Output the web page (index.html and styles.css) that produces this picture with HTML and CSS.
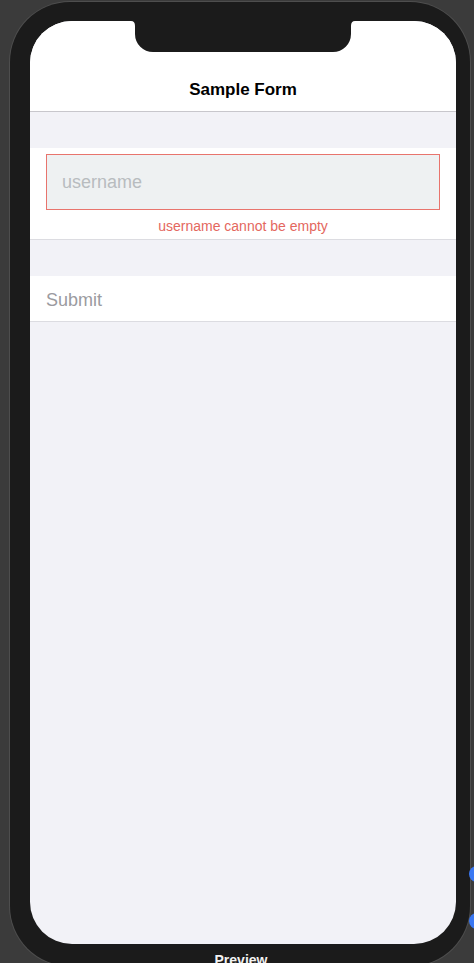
FILE: index.html
```html
<!DOCTYPE html>
<html lang="en">
<head>
<meta charset="utf-8">
<title>Sample Form</title>
<link rel="stylesheet" href="styles.css">
</head>
<body>
<div class="device">
  <div class="screen">
    <svg class="notch" width="224" height="31" viewBox="0 0 224 31" aria-hidden="true">
      <path d="M0 0 Q4 0 4 5 L4 13 A18 18 0 0 0 22 31 L202 31 A18 18 0 0 0 220 13 L220 5 Q220 0 224 0 Z" fill="#1b1b1b"/>
    </svg>
    <header class="navbar"><h1 class="title">Sample Form</h1></header>
    <div class="spacer"></div>
    <section class="group">
      <div class="field-cell">
        <div class="input"><span class="placeholder">username</span></div>
        <p class="error">username cannot be empty</p>
      </div>
    </section>
    <div class="spacer"></div>
    <section class="group">
      <div class="button-row">Submit</div>
    </section>
  </div>
  <div class="preview-label">Preview</div>
</div>
<span class="dot dot-1"></span>
<span class="dot dot-2"></span>
</body>
</html>
```

FILE: styles.css
```css
html, body {
  margin: 0;
  padding: 0;
  overflow: hidden;
  height: 100%;
}
body {
  background: #3b3b3b;
  font-family: "Liberation Sans", Arial, sans-serif;
  position: relative;
}
.device {
  box-sizing: border-box;
  margin: 2px 0 0 10px;
  width: 460px;
  height: 964px;
  border-radius: 60px;
  background: #1b1b1b;
  box-shadow: 0 0 0 1px #4e4e4e;
  padding: 19px 14px 0 20px;
}
.screen {
  position: relative;
  display: flex;
  flex-direction: column;
  width: 426px;
  height: 923px;
  border-radius: 42px;
  overflow: hidden;
  background: #f2f2f7;
}
.notch {
  position: absolute;
  top: 0;
  left: 101px;
  display: block;
}
.navbar {
  box-sizing: border-box;
  height: 91px;
  flex: none;
  background: #fff;
  border-bottom: 1px solid #c8c7cc;
  display: flex;
  align-items: flex-end;
  justify-content: center;
  padding-bottom: 10px;
}
.title {
  margin: 0;
  font-size: 17px;
  line-height: 22px;
  font-weight: bold;
  color: #000;
}
.spacer {
  height: 36px;
  flex: none;
}
.group {
  background: #fff;
  border-bottom: 1px solid #dcdce1;
  flex: none;
}
.field-cell {
  padding: 6px 16px 3px;
}
.input {
  box-sizing: border-box;
  height: 56px;
  border: 1.5px solid #e8746d;
  background: #eef1f2;
  display: flex;
  align-items: center;
  padding-left: 15px;
}
.placeholder {
  font-size: 18px;
  color: #b8bcbf;
}
.error {
  margin: 6px 0 0;
  text-align: center;
  font-size: 14px;
  line-height: 20px;
  color: #e4675e;
}
.button-row {
  box-sizing: border-box;
  height: 45px;
  display: flex;
  align-items: center;
  padding: 3px 0 0 16px;
  font-size: 18px;
  color: #9b9b9f;
}
.preview-label {
  margin-top: 8px;
  text-align: center;
  font-size: 14px;
  line-height: 16px;
  font-weight: bold;
  color: #f2f2f2;
  padding-right: 4px;
}
.dot {
  position: absolute;
  left: 469px;
  width: 16px;
  height: 16px;
  border-radius: 50%;
  background: #3a78f2;
}
.dot-1 { top: 866px; }
.dot-2 { top: 913px; }
```
